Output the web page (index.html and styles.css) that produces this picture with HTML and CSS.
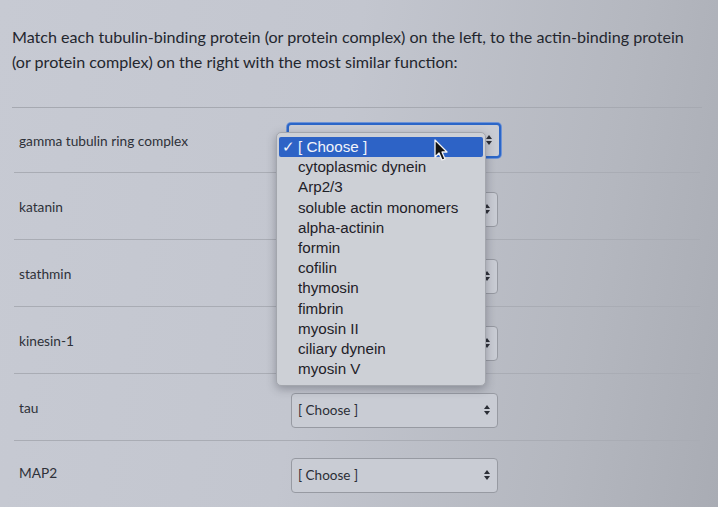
FILE: index.html
```html
<!DOCTYPE html>
<html>
<head>
<meta charset="utf-8">
<link rel="stylesheet" href="styles.css">
</head>
<body>
<div class="page">
  <div class="question">
    <p>Match each tubulin-binding protein (or protein complex) on the left, to the actin-binding protein (or protein complex) on the right with the most similar function:</p>
  </div>
  <div class="rows">
    <div class="row first">
      <div class="label">gamma tubulin ring complex</div>
      <div class="select focused"><span>[ Choose ]</span><span class="arrows"><i class="up"></i><i class="down"></i></span></div>
    </div>
    <div class="row">
      <div class="label">katanin</div>
      <div class="select"><span>[ Choose ]</span><span class="arrows"><i class="up"></i><i class="down"></i></span></div>
    </div>
    <div class="row">
      <div class="label">stathmin</div>
      <div class="select"><span>[ Choose ]</span><span class="arrows"><i class="up"></i><i class="down"></i></span></div>
    </div>
    <div class="row">
      <div class="label">kinesin-1</div>
      <div class="select"><span>[ Choose ]</span><span class="arrows"><i class="up"></i><i class="down"></i></span></div>
    </div>
    <div class="row">
      <div class="label">tau</div>
      <div class="select"><span>[ Choose ]</span><span class="arrows"><i class="up"></i><i class="down"></i></span></div>
    </div>
    <div class="row last">
      <div class="label">MAP2</div>
      <div class="select"><span>[ Choose ]</span><span class="arrows"><i class="up"></i><i class="down"></i></span></div>
    </div>
  </div>

  <ul class="menu">
    <li class="active"><span class="check">✓</span>[ Choose ]</li>
    <li>cytoplasmic dynein</li>
    <li>Arp2/3</li>
    <li>soluble actin monomers</li>
    <li>alpha-actinin</li>
    <li>formin</li>
    <li>cofilin</li>
    <li>thymosin</li>
    <li>fimbrin</li>
    <li>myosin II</li>
    <li>ciliary dynein</li>
    <li>myosin V</li>
  </ul>

  <svg class="cursor" width="16" height="24" viewBox="0 0 16 24">
    <path d="M1 1 L1 18 L5 14 L8 21 L11 20 L8 13 L13 13 Z" fill="#111" stroke="#f4f4f4" stroke-width="1.3" stroke-linejoin="round"/>
  </svg>
</div>
</body>
</html>
```

FILE: styles.css
```css
html, body {
  margin: 0;
  padding: 0;
}
body {
  width: 718px;
  height: 507px;
  overflow: hidden;
  background: linear-gradient(100deg, #c7cad3 0%, #c3c6cf 45%, #b4b7bf 80%, #a9acb4 100%);
  font-family: Lato, "Open Sans", sans-serif;
  color: #2b2e36;
}
.page {
  position: relative;
  height: 507px;
}
.question {
  padding-top: 24px;
  height: 108px;
  box-sizing: border-box;
  border-bottom: 1px solid #a6a9b1;
  margin: 0 16px 0 12px;
}
.question p {
  margin: 0;
  font-size: 16.1px;
  line-height: 25px;
  color: #23262e;
}
.rows {
  margin: 0 18px 0 14px;
}
.row {
  display: flex;
  align-items: center;
  height: 66px;
  border-bottom: 1px solid #a9acb4;
}
.row.first {
  height: 64px;
}
.row.last {
  border-bottom: none;
  height: 62px;
}
.label {
  width: 272px;
  padding-left: 5px;
  font-size: 13.7px;
  color: #2e3139;
}
.select {
  box-sizing: border-box;
  width: 207px;
  height: 35px;
  margin-top: 6px;
  border: 1px solid #979aa2;
  border-radius: 4px;
  background: #c9ccd4;
  display: flex;
  align-items: center;
  justify-content: space-between;
  padding: 0 7px 0 6px;
  font-size: 13.5px;
  color: #2b2e36;
}
.select.focused {
  width: 214px;
  margin-top: 0;
  margin-left: -4px;
  border: 2px solid #2b66c8;
  box-shadow: 0 0 0 1px #6d93d6;
}
.arrows {
  display: flex;
  flex-direction: column;
  gap: 2px;
  align-items: center;
}
.arrows i {
  display: block;
  width: 0;
  height: 0;
  border-left: 3px solid transparent;
  border-right: 3px solid transparent;
}
.arrows .up {
  border-bottom: 4px solid #2a2d35;
}
.arrows .down {
  border-top: 4px solid #2a2d35;
}
.menu {
  position: absolute;
  left: 276px;
  top: 132px;
  width: 210px;
  margin: 0;
  padding: 4px 0 6px;
  list-style: none;
  box-sizing: border-box;
  background: #cdd0d6;
  border: 1px solid #a3a6ad;
  border-radius: 5px;
  box-shadow: 0 3px 10px rgba(40, 44, 55, 0.35);
  font-family: "Liberation Sans", Arial, sans-serif;
  font-size: 15.2px;
  color: #1f2128;
}
.menu li {
  height: 20.2px;
  line-height: 20.2px;
  padding-left: 19px;
  margin: 0 2px;
  white-space: nowrap;
}
.menu li.active {
  background: #2d63c6;
  color: #f2f4fa;
  padding-left: 3px;
  border-radius: 2px;
}
.check {
  display: inline-block;
  width: 16px;
}
.cursor {
  position: absolute;
  left: 434px;
  top: 139px;
}
```
